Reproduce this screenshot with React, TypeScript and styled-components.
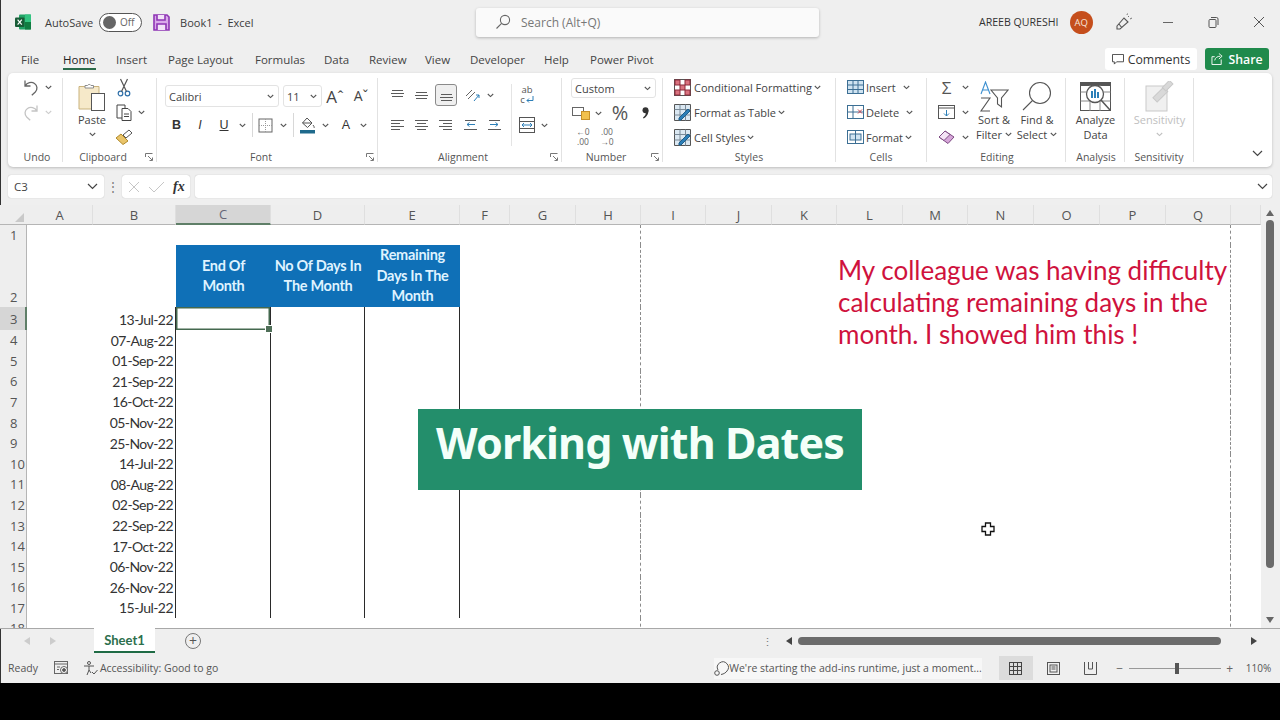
import React from 'react';
import styled, { createGlobalStyle } from 'styled-components';

const UI = `"Open Sans", "Noto Sans", sans-serif`;
const SHEET = `Lato, "Liberation Sans", sans-serif`;

const GlobalStyle = createGlobalStyle`
  html, body { margin: 0; padding: 0; background: #000; }
  body { font-family: ${UI}; color: #444; }
  * { box-sizing: border-box; }
  svg { display: block; }
`;

// small drawn icons
const Chev = ({ c = '#555' }: { c?: string }) => (
  <svg width="7" height="5" viewBox="0 0 7 5" fill="none" stroke={c} strokeWidth="1.1"><path d="M.8 1l2.7 2.6L6.2 1" /></svg>
);
const BigChev = () => (
  <svg width="11" height="7" viewBox="0 0 11 7" fill="none" stroke="#444" strokeWidth="1.2"><path d="M1 1l4.5 4.5L10 1" /></svg>
);
const ExcelLogo = () => (
  <svg width="16" height="16" viewBox="0 0 16 16">
    <rect x="4" y="0.5" width="12" height="15" rx="1" fill="#21a366" />
    <rect x="10" y="0.5" width="6" height="7.5" fill="#33c481" />
    <rect x="10" y="8" width="6" height="7.5" fill="#107c41" />
    <rect x="0" y="3.5" width="9.5" height="9.5" rx="1" fill="#185c37" />
    <path d="M2.6 5.7l4.2 5M6.8 5.7l-4.2 5" stroke="#fff" strokeWidth="1.2" />
  </svg>
);
const Floppy = () => (
  <svg width="17" height="17" viewBox="0 0 17 17" fill="#d9a9ea" stroke="#8e35b5" strokeWidth="1.6">
    <path d="M1 1h13l2 2v13H1z" />
    <path d="M4 1v5h8V1M4 16v-6h9v6" fill="#f2e2f8" />
  </svg>
);
const SearchGlyph = () => (
  <svg width="16" height="16" viewBox="0 0 16 16" fill="none" stroke="#666" strokeWidth="1.1"><circle cx="10" cy="6" r="4.6" /><path d="M6.6 9.4L1.5 14.5" /></svg>
);
const PenGlyph = () => (
  <svg width="18" height="18" viewBox="0 0 18 18" fill="none" stroke="#555" strokeWidth="1.1">
    <path d="M2 13l7-8 4 4-8 7-3 0zM4 11l3 4" /><path d="M13 4l1-1M15 6l2-1M12 2l.5-1.5" strokeWidth="0.8" />
  </svg>
);
const MinGlyph = () => <svg width="11" height="11" viewBox="0 0 11 11"><path d="M0 5.5h10" stroke="#666" /></svg>;
const RestoreGlyph = () => (
  <svg width="11" height="11" viewBox="0 0 11 11" fill="none" stroke="#555"><rect x="1" y="2.5" width="7" height="8" rx="1" /><path d="M3 .5h5.5a1.5 1.5 0 0 1 1.5 1.5v6" /></svg>
);
const CloseGlyph = () => <svg width="12" height="12" viewBox="0 0 12 12" stroke="#555"><path d="M1 1l10 10M11 1L1 11" /></svg>;
const UndoGlyph = ({ c }: { c: string }) => (
  <svg width="16" height="17" viewBox="0 0 16 17" fill="none" stroke={c} strokeWidth="1.3"><path d="M2 1.5V7h5.5M2.2 7C4 3.5 8.5 2.5 11.5 4.5c3 2 3.2 6 .8 8.5l-3.5 3.2" /></svg>
);
const RedoGlyph = ({ c }: { c: string }) => (
  <svg width="16" height="17" viewBox="0 0 16 17" fill="none" stroke={c} strokeWidth="1.3"><path d="M14 1.5V7H8.5M13.8 7C12 3.5 7.5 2.5 4.5 4.5c-3 2-3.2 6-.8 8.5l3.5 3.2" /></svg>
);
const PasteGlyph = () => (
  <svg width="28" height="29" viewBox="0 0 28 29">
    <path d="M1 3.5h20V26H1z" fill="#f6e9c9" stroke="#c9b27c" />
    <path d="M7 5V2.5h2.5a2 2 0 0 1 3.5 0h2.5V5z" fill="#fff" stroke="#8c8c8c" />
    <rect x="13.5" y="10.5" width="13" height="17" fill="#fff" stroke="#555" />
  </svg>
);
const Scissors = () => (
  <svg width="14" height="19" viewBox="0 0 14 19" fill="none" stroke="#2c6ea8" strokeWidth="1.2">
    <circle cx="3.5" cy="15.5" r="2.3" /><circle cx="10.5" cy="15.5" r="2.3" />
    <path d="M4.5 13.5L10.5 1M9.5 13.5L3.5 1" stroke="#555" />
  </svg>
);
const CopyGlyph = () => (
  <svg width="17" height="17" viewBox="0 0 17 17" fill="#fff" stroke="#444"><path d="M1 1h8v13H1z" /><path d="M6 4.5h6l3 3v9H6zM8 10h5M8 12.5h5" /></svg>
);
const Painter = () => (
  <svg width="18" height="16" viewBox="0 0 18 16">
    <path d="M1 9l5-4 7 7-5 3.5z" fill="#e9c46a" stroke="#b18a2c" />
    <path d="M8 6l6-5 3 3-6 5z" fill="#fff" stroke="#555" />
  </svg>
);
const FillGlyph = () => (
  <svg width="17" height="18" viewBox="0 0 17 18" fill="none" stroke="#555">
    <path d="M8 2l5 5-4.5 4.5L3.5 7zM3.5 7H13" /><path d="M14 9c1 1.5 1.5 2 1 3" />
    <rect x="1" y="14" width="15" height="3.5" fill="#1f6a8c" stroke="none" />
  </svg>
);
const BordersGlyph = () => (
  <svg width="15" height="15" viewBox="0 0 15 15" fill="none" stroke="#999" strokeDasharray="1 1"><rect x="1" y="1" width="13" height="13" stroke="#666" strokeDasharray="none" /><path d="M7.5 1v13M1 7.5h13" /></svg>
);
const Lines = ({ kind }: { kind: 'top' | 'mid' | 'bot' | 'left' | 'center' | 'right' | 'out' | 'in' }) => {
  const row = { top: [2, 5, 8], mid: [4, 7, 10], bot: [6, 9, 12], left: [2, 5, 8, 11], center: [2, 5, 8, 11], right: [2, 5, 8, 11], out: [2, 11], in: [2, 11] }[kind];
  const short = (i: number) => {
    if (kind === 'left') return i % 2 ? 'M1 0h9' : 'M1 0h13';
    if (kind === 'right') return i % 2 ? 'M5 0h9' : 'M1 0h13';
    if (kind === 'center') return i % 2 ? 'M3 0h9' : 'M1 0h13';
    return i % 2 ? 'M1 0h13' : 'M2 0h11';
  };
  return (
    <svg width="15" height="14" viewBox="0 0 15 14" fill="none" stroke="#5b5b5b">
      {row.map((y, i) => <path key={y} d={short(i)} transform={`translate(0 ${y + 0.5})`} />)}
      {kind === 'out' && <path d="M12 6.5H4M6.5 4.5L4 6.5l2.5 2" stroke="#2c7fb8" />}
      {kind === 'in' && <path d="M3 6.5h8M8.5 4.5l2.5 2-2.5 2" stroke="#2c7fb8" />}
    </svg>
  );
};
const Orient = () => (
  <svg width="16" height="15" viewBox="0 0 16 15" fill="none" stroke="#666"><path d="M2 8l6-6M4 11l7-7" /><path d="M10 13l5-6M15 7v3M15 7h-3" stroke="#2c7fb8" /></svg>
);
const ReturnArrow = () => (
  <svg width="9" height="8" viewBox="0 0 9 8" fill="none" stroke="#2c7fb8"><path d="M8 0v4.5H2M4 2.5l-2 2 2 2" /></svg>
);
const MergeGlyph = () => (
  <svg width="16" height="16" viewBox="0 0 16 16" fill="none" stroke="#555"><rect x=".5" y=".5" width="15" height="15" /><path d="M.5 4.5h15M.5 11.5h15" /><path d="M3 8h10M5 6L3 8l2 2M11 6l2 2-2 2" stroke="#2c7fb8" /></svg>
);
const CurrencyGlyph = () => (
  <svg width="18" height="14" viewBox="0 0 18 14" fill="none" stroke="#666"><rect x=".5" y="1.5" width="11" height="8" /><rect x="9.5" y="5.5" width="8" height="8" fill="#f2c14e" stroke="#c8912a" /></svg>
);
const CommaGlyph = () => (
  <svg width="7" height="12" viewBox="0 0 7 12" fill="#333"><circle cx="3.5" cy="3.2" r="3" /><path d="M6.4 3.2C6.6 7 4.5 10 1.5 11.5L1 10.5C3 9 4 7.5 3.8 5z" /></svg>
);
const CfGlyph = () => (
  <svg width="17" height="17" viewBox="0 0 17 17" stroke="#8c2b3a">
    <rect x=".5" y=".5" width="16" height="16" fill="#fff" stroke="#555" />
    <rect x="1" y="1" width="5" height="5" fill="#d9727f" /><rect x="11" y="1" width="5" height="5" fill="#d9727f" />
    <rect x="6" y="6" width="5" height="5" fill="#d9727f" /><rect x="1" y="11" width="5" height="5" fill="#d9727f" /><rect x="11" y="11" width="5" height="5" fill="#d9727f" />
  </svg>
);
const TableGlyph = () => (
  <svg width="17" height="17" viewBox="0 0 17 17" fill="none" stroke="#555">
    <path d="M.5.5h16v16H.5z" fill="#dbe8f2" /><path d="M.5 5.5h16M.5 11h16M6 .5v16M11.5.5v16" stroke="#7a8b99" />
    <path d="M5 14l9-9 2 2-9 9H5z" fill="#2c7fb8" stroke="#1d5f8c" />
  </svg>
);
const CellInsert = () => (
  <svg width="17" height="14" viewBox="0 0 17 14" fill="#cfe3f1" stroke="#3c6f94"><rect x=".5" y=".5" width="16" height="13" /><path d="M.5 5h16M.5 9.5h16M6 .5v13M11 .5v13" fill="none" /></svg>
);
const CellDelete = () => (
  <svg width="17" height="14" viewBox="0 0 17 14" fill="#fff" stroke="#3c6f94"><rect x=".5" y=".5" width="16" height="13" /><path d="M.5 7h16M6 .5v13" fill="none" /><path d="M11 4.5l4 4M15 4.5l-4 4" stroke="#c8414f" /></svg>
);
const CellFormat = () => (
  <svg width="17" height="14" viewBox="0 0 17 14" fill="#cfe3f1" stroke="#3c6f94"><rect x=".5" y=".5" width="16" height="13" fill="#fff" /><rect x="3" y="4" width="11" height="6" /><path d="M8.5.5v13" fill="none" /></svg>
);
const FillDown = () => (
  <svg width="17" height="14" viewBox="0 0 17 14" fill="none" stroke="#555"><rect x=".5" y=".5" width="16" height="13" /><path d="M.5 3h16" /><path d="M8.5 5v6M6 8.5L8.5 11 11 8.5" stroke="#2c7fb8" /></svg>
);
const Eraser = () => (
  <svg width="17" height="14" viewBox="0 0 17 14" stroke="#7d4a82"><path d="M1 7l6-6 9 6-6 6.5z" fill="#d6a6d9" /><path d="M1 7l6-6 5 3.5-6 6z" fill="#f4e3f5" /></svg>
);
const SortFilter = () => (
  <svg width="30" height="31" viewBox="0 0 30 31" fill="none" strokeWidth="1.1">
    <path d="M2 13L6.5 1 11 13M3.5 9h6" stroke="#3c8fd0" />
    <path d="M2 17h9L2 30h9" stroke="#555" />
    <path d="M12 9h17l-6.5 8v9l-4-3v-6z" stroke="#555" />
  </svg>
);
const Magnifier = () => (
  <svg width="30" height="31" viewBox="0 0 30 31" fill="none" stroke="#555" strokeWidth="1.1"><circle cx="18" cy="12" r="10.5" /><path d="M10.5 19.5L1 29" /></svg>
);
const AnalyzeGlyph = () => (
  <svg width="31" height="31" viewBox="0 0 31 31" fill="none" stroke="#555">
    <rect x=".5" y="1.5" width="30" height="28" /><path d="M.5 1.5h30v3H.5z" fill="#555" />
    <path d="M.5 11h30M.5 20h30M10 4v26M20 4v26" stroke="#888" />
    <circle cx="15" cy="13" r="8.5" fill="#fff" strokeWidth="1.3" />
    <path d="M11 10v7h2v-7zM14 8v9h2V8zM17 11v6h2v-6z" fill="#2c7fb8" stroke="none" />
    <path d="M21 19l9 10" strokeWidth="1.5" />
  </svg>
);
const SensitivityGlyph = () => (
  <svg width="30" height="31" viewBox="0 0 30 31" stroke="#c9c9c9" fill="#f0f0f0">
    <rect x="1" y="5" width="21" height="25" />
    <rect x="8" y="11" width="15" height="6" transform="rotate(-45 15 14)" fill="#d9d9d9" />
    <rect x="18" y="2" width="10" height="5" transform="rotate(-45 23 5)" fill="#d9d9d9" />
  </svg>
);
const Launcher = () => (
  <svg width="8" height="8" viewBox="0 0 8 8" fill="none" stroke="#777"><path d="M.5 4V.5h7M3 3l4 4M4.5 7.5h3v-3" /></svg>
);
const GridViewGlyph = () => (
  <svg width="13" height="13" viewBox="0 0 13 13" fill="none" stroke="#444"><rect x=".5" y=".5" width="12" height="12" /><path d="M4.5.5v12M8.5.5v12M.5 4.5h12M.5 8.5h12" /></svg>
);
const PageViewGlyph = () => (
  <svg width="13" height="13" viewBox="0 0 13 13" fill="none" stroke="#555"><rect x=".5" y=".5" width="12" height="12" /><rect x="3" y="3" width="7" height="7" /><path d="M4.5 5h4M4.5 7h4" /></svg>
);
const BreakViewGlyph = () => (
  <svg width="13" height="13" viewBox="0 0 13 13" fill="none" stroke="#555"><path d="M.5 0v12.5h12V0M4.5 0v7h4V0" /></svg>
);
const MacroGlyph = () => (
  <svg width="15" height="14" viewBox="0 0 15 14" fill="none" stroke="#666"><rect x=".5" y=".5" width="13" height="12" /><path d="M.5 3h13M3 6h3M3 8.5h2" /><circle cx="10" cy="9" r="3.5" fill="#fff" /><circle cx="10" cy="9" r="1.5" fill="#555" /></svg>
);
const AccessGlyph = () => (
  <svg width="15" height="15" viewBox="0 0 15 15" fill="none" stroke="#555"><circle cx="6" cy="2" r="1.5" /><path d="M1 5h10M6 5v4l-2 5M6 9l2 3M9 11l2 2 3.5-4" /></svg>
);
const RuntimeGlyph = () => (
  <svg width="15" height="16" viewBox="0 0 15 16" fill="none" stroke="#555"><path d="M4 10a5.5 5.5 0 1 1 9 1c-1 1.5-3 3-6 3.5" /><circle cx="3" cy="13" r="2.3" /></svg>
);
const CommentGlyph = () => (
  <svg width="12" height="11" viewBox="0 0 13 12" fill="none" stroke="#444"><path d="M.5.5h12v8H5L2.5 11V8.5h-2z" /></svg>
);
const ShareGlyph = () => (
  <svg width="13" height="12" viewBox="0 0 14 13" fill="none" stroke="#fff"><path d="M11 7v5.5H1V4h3" /><path d="M4 8c.5-3 3-4.5 6-4.5M8.5.5L12 3.5 8.5 6.5" /></svg>
);

const Page = styled.div`
  width: 1280px;
  height: 720px;
  background: #000;
  overflow: hidden;
`;

const Window = styled.div`
  height: 683px;
  background: #efefef;
  box-shadow: inset 1px 0 0 #333;
  display: flex;
  flex-direction: column;
`;

const TitleBar = styled.div`
  height: 44px;
  display: flex;
  align-items: center;
  font-size: 11px;
`;

const TitleLeft = styled.div`
  width: 476px;
  display: flex;
  align-items: center;
  padding-left: 15px;
`;

const AppText = styled.span<{ $ml: number }>`
  margin-left: ${(p) => p.$ml}px;
  color: #3c3c3c;
  white-space: nowrap;
`;

const Toggle = styled.div`
  width: 43px;
  height: 19px;
  margin-left: 6px;
  border: 1px solid #555;
  border-radius: 10px;
  background: #fff;
  display: flex;
  align-items: center;
  gap: 4px;
  padding-left: 3px;
  font-size: 10px;
  color: #666;
`;

const ToggleKnob = styled.span`
  width: 13px;
  height: 13px;
  border-radius: 50%;
  background: #666;
`;

const SearchBox = styled.div`
  width: 343px;
  height: 29px;
  background: #fafafa;
  border-radius: 3px;
  box-shadow: 0 1px 3px rgba(0, 0, 0, 0.25);
  display: flex;
  align-items: center;
  gap: 10px;
  padding-left: 19px;
  font-size: 12px;
  color: #777;
`;

const TitleRight = styled.div`
  flex: 1;
  display: flex;
  align-items: center;
  padding-left: 160px;
  white-space: nowrap;
  font-size: 10.6px;
  color: #333;
`;

const Avatar = styled.div`
  width: 23px;
  height: 23px;
  margin-left: 11px;
  border-radius: 50%;
  background: #c54e1c;
  color: #f7e4d8;
  font-size: 9.5px;
  display: flex;
  align-items: center;
  justify-content: center;
`;

const WinSlot = styled.div<{ $w: number }>`
  width: ${(p) => p.$w}px;
  display: flex;
  justify-content: center;
`;

const TabRow = styled.div`
  height: 29px;
  display: flex;
  align-items: flex-start;
  padding-left: 21px;
  font-size: 11.5px;
  color: #444;
`;

const Tab = styled.div<{ $w: number }>`
  width: ${(p) => p.$w}px;
  flex: none;
`;

const TabLabel = styled.div<{ $active?: boolean }>`
  display: inline-block;
  height: 26px;
  line-height: 31px;
  white-space: nowrap;
  color: ${(p) => (p.$active ? '#222' : '#444')};
  border-bottom: 2px solid ${(p) => (p.$active ? '#2b6a4a' : 'transparent')};
`;

const TabActions = styled.div`
  margin-left: auto;
  display: flex;
  gap: 8px;
  padding: 4px 11px 0 0;
`;

const CommentsButton = styled.div`
  width: 92px;
  height: 22px;
  background: #fff;
  border-radius: 3px;
  display: flex;
  align-items: center;
  justify-content: center;
  gap: 4px;
  font-size: 12.3px;
  color: #333;
`;

const ShareButton = styled(CommentsButton)`
  width: 64px;
  background: #1f8a4c;
  color: #fff;
  font-weight: 600;
`;

const Ribbon = styled.div`
  height: 94px;
  margin: 0 8px;
  padding: 5px 0;
  background: #fff;
  border-radius: 5px;
  box-shadow: 0 1px 3px rgba(0, 0, 0, 0.22);
  display: flex;
`;

const Group = styled.div<{ $w: number; $last?: boolean }>`
  width: ${(p) => p.$w}px;
  flex: none;
  display: flex;
  flex-direction: column;
  border-right: ${(p) => (p.$last ? 'none' : '1px solid #e2e2e2')};
`;

const GroupBody = styled.div<{ $pl?: number; $pt?: number }>`
  height: 72px;
  flex: none;
  display: flex;
  padding-left: ${(p) => p.$pl ?? 0}px;
  padding-top: ${(p) => p.$pt ?? 0}px;
`;

const GroupLabel = styled.div`
  display: grid;
  grid-template-columns: 1fr auto 1fr;
  align-items: center;
  height: 14px;
  flex: none;
  font-size: 10.5px;
  color: #555;
`;

const LabelText = styled.span<{ $shift: number }>`
  grid-column: 2;
  white-space: nowrap;
  margin-left: ${(p) => (p.$shift > 0 ? p.$shift * 2 : 0)}px;
  margin-right: ${(p) => (p.$shift < 0 ? -p.$shift * 2 : 0)}px;
`;

const LauncherSlot = styled.span`
  grid-column: 3;
  justify-self: end;
  padding-right: 3px;
`;

const Stack = styled.div<{ $gap?: number }>`
  display: flex;
  flex-direction: column;
  gap: ${(p) => p.$gap ?? 7}px;
`;

const Row = styled.div<{ $h?: number }>`
  height: ${(p) => p.$h ?? 18}px;
  display: flex;
  align-items: center;
  font-size: 11px;
  color: #444;
  white-space: nowrap;
`;

const Slot = styled.div<{ $w: number; $selected?: boolean }>`
  width: ${(p) => p.$w}px;
  height: 100%;
  flex: none;
  display: flex;
  align-items: center;
  justify-content: center;
  ${(p) => p.$selected && 'border: 1px solid #8a8a8a; border-radius: 3px; background: #efefef; margin: 0 2px; width: 22px;'}
`;

const SmallSep = styled.div`
  width: 1px;
  height: 24px;
  background: #d8d8d8;
`;

const VSep = styled.div`
  width: 1px;
  height: 62px;
  margin: 0 5px;
  background: #e4e4e4;
`;

const ComboBox = styled.div<{ $w: number; $h?: number }>`
  width: ${(p) => p.$w}px;
  height: ${(p) => p.$h ?? 22}px;
  flex: none;
  display: flex;
  align-items: center;
  justify-content: space-between;
  padding: 0 4px 0 3px;
  border: 1px solid #e3e3e3;
  border-radius: 3px;
  background: #fff;
  font-size: 11px;
  color: #444;
`;

const GrowGlyph = styled.span<{ $size: number }>`
  font-size: ${(p) => p.$size}px;
  line-height: 1;
  color: #444;
`;

const FontToggle = styled.span<{ $bold?: boolean; $italic?: boolean; $under?: boolean }>`
  font-family: "Liberation Sans", sans-serif;
  font-size: 12.5px;
  color: #333;
  font-weight: ${(p) => (p.$bold ? 700 : 400)};
  font-style: ${(p) => (p.$italic ? 'italic' : 'normal')};
  text-decoration: ${(p) => (p.$under ? 'underline' : 'none')};
`;

const Wrap = styled.div`
  display: flex;
  flex-direction: column;
  align-items: center;
  font-size: 9.5px;
  line-height: 10px;
  color: #555;
`;

const WrapLine = styled.div`
  display: flex;
  align-items: center;
  height: 10px;
`;

const NumGlyph = styled.span<{ $size: number }>`
  font-size: ${(p) => p.$size}px;
  line-height: 1;
  color: #555;
`;

const DecGlyph = styled.div`
  font-size: 8.5px;
  line-height: 10px;
  text-align: center;
  color: #666;
`;

const IconLabel = styled.span`
  margin-left: 3px;
`;

const CellText = styled.span<{ $w: number }>`
  margin-left: 2px;
  width: ${(p) => p.$w}px;
`;

const BigButton = styled.div<{ $w: number; $disabled?: boolean }>`
  width: ${(p) => p.$w}px;
  flex: none;
  display: flex;
  flex-direction: column;
  align-items: center;
  font-size: 11px;
  line-height: 15px;
  white-space: nowrap;
  color: ${(p) => (p.$disabled ? '#c0c0c0' : '#444')};
`;

const BigIcon = styled.div`
  height: 34px;
  display: flex;
  align-items: flex-end;
`;

const TextLine = styled.div`
  display: flex;
  align-items: center;
  gap: 3px;
  height: 15px;
`;

const Collapse = styled.div`
  flex: 1;
  display: flex;
  justify-content: flex-end;
  align-items: flex-end;
  padding: 0 9px 5px 0;
`;

const FormulaRow = styled.div`
  height: 38px;
  display: flex;
  align-items: flex-start;
  padding: 8px 8px 0;
`;

const InputBox = styled.div`
  height: 23px;
  background: #fff;
  border-radius: 3px;
  box-shadow: 0 0 1px rgba(0, 0, 0, 0.3);
  display: flex;
  align-items: center;
`;

const NameBox = styled(InputBox)`
  width: 96px;
  justify-content: space-between;
  padding: 0 6px;
  font-size: 11.5px;
  color: #444;
`;

const Dots = styled.div`
  width: 18px;
  height: 23px;
  display: flex;
  align-items: center;
  justify-content: center;
  color: #777;
  font-size: 12px;
`;

const FxBox = styled(InputBox)`
  width: 68px;
  padding-left: 6px;
  gap: 8px;
`;

const Fx = styled.span`
  font-family: "Liberation Serif", serif;
  font-style: italic;
  font-weight: 700;
  font-size: 14px;
  color: #333;
`;

const FormulaInput = styled(InputBox)`
  flex: 1;
  margin-left: 5px;
  justify-content: flex-end;
  padding-right: 4px;
`;

const SheetRow = styled.div`
  height: 423px;
  display: flex;
`;

const SheetArea = styled.div`
  position: relative;
  width: 1261px;
  flex: none;
  overflow: hidden;
`;

const Grid = styled.div`
  display: grid;
  grid-template-columns: 27px 66px 83px 95px 94px 95px 50px 66px 65px 65px 66px 65px 66px 65px 66px 66px 66px 65px 30px;
  grid-template-rows: 20px 20px 62px 23px repeat(14, 20.6px) 20px;
  height: 423px;
`;

const Corner = styled.div`
  background: #eeeeee;
  border-bottom: 1px solid #b5b5b5;
  display: flex;
  justify-content: flex-end;
  align-items: flex-end;
  padding: 0 3px 2px 0;
`;

const ColHead = styled.div<{ $active?: boolean }>`
  background: ${(p) => (p.$active ? '#d6d6d6' : '#eeeeee')};
  border-right: 1px solid #dfdfdf;
  border-bottom: ${(p) => (p.$active ? '2px solid #5f7f68' : '1px solid #b5b5b5')};
  display: flex;
  align-items: center;
  justify-content: center;
  font-size: 13px;
  color: ${(p) => (p.$active ? '#667' : '#555')};
`;

const RowHead = styled.div<{ $active?: boolean; $tall?: boolean }>`
  background: ${(p) => (p.$active ? '#d6d6d6' : '#eeeeee')};
  border-right: ${(p) => (p.$active ? '2px solid #5f7f68' : '1px solid #b5b5b5')};
  display: flex;
  align-items: ${(p) => (p.$tall ? 'flex-end' : 'center')};
  padding-left: 10px;
  padding-bottom: ${(p) => (p.$tall ? 1 : 0)}px;
  font-size: 13px;
  color: #555;
`;

const Cell = styled.div<{ $line?: boolean; $dash?: boolean; $selected?: boolean }>`
  position: relative;
  background: #fff;
  border-right: ${(p) => (p.$line ? '1px solid #2a2a2a' : p.$dash ? '1px dashed #8b8b8b' : 'none')};
  display: flex;
  align-items: flex-end;
  justify-content: flex-end;
  padding: 0 2px 1px 0;
  font-family: ${SHEET};
  font-size: 14px;
  letter-spacing: -0.55px;
  line-height: 19px;
  color: #333;
  ${(p) => p.$selected && `
    box-shadow: inset 0 0 0 1.5px #44694f;
    z-index: 1;
    &::after {
      content: '';
      position: absolute;
      right: -3px;
      bottom: -3px;
      width: 6px;
      height: 6px;
      background: #4f6f58;
      border: 1px solid #fff;
    }
  `}
`;

const HeadCell = styled.div`
  background: #0f70b7;
  display: flex;
  align-items: center;
  justify-content: center;
  text-align: center;
  font-family: ${SHEET};
  font-weight: 700;
  font-size: 14.5px;
  letter-spacing: -0.3px;
  line-height: 20.5px;
  color: #dff3ff;
`;

const Note = styled.div`
  position: absolute;
  left: 838px;
  top: 49px;
  width: 400px;
  font-family: ${SHEET};
  font-size: 26px;
  line-height: 32px;
  color: #cf123d;
`;

const Banner = styled.div`
  position: absolute;
  left: 418px;
  top: 204px;
  width: 444px;
  height: 81px;
  background: #238e6b;
  color: #f4fff9;
  display: flex;
  align-items: center;
  justify-content: center;
  padding-bottom: 15px;
  font-family: "Noto Sans", sans-serif;
  font-weight: 700;
  font-size: 43px;
  letter-spacing: -0.85px;
  white-space: nowrap;
`;

const Cursor = styled.div`
  position: absolute;
  left: 981px;
  top: 317px;
`;

const VScroll = styled.div`
  flex: 1;
  display: flex;
  flex-direction: column;
  align-items: center;
  padding: 5px 1px 0 0;
`;

const VThumb = styled.div`
  width: 8px;
  height: 348px;
  margin-top: 4px;
  background: #6b6b6b;
  border-radius: 4px;
`;

const TriUp = styled.div`
  width: 0;
  height: 0;
  border-left: 4.5px solid transparent;
  border-right: 4.5px solid transparent;
  border-bottom: 6px solid #666;
`;

const TriDown = styled(TriUp)`
  margin-top: 49px;
  border-bottom: none;
  border-top: 6px solid #666;
`;

const TriLeft = styled.div<{ $c?: string }>`
  width: 0;
  height: 0;
  border-top: 4.5px solid transparent;
  border-bottom: 4.5px solid transparent;
  border-right: 6px solid ${(p) => p.$c ?? '#444'};
`;

const TriRight = styled.div<{ $c?: string }>`
  width: 0;
  height: 0;
  border-top: 4.5px solid transparent;
  border-bottom: 4.5px solid transparent;
  border-left: 6px solid ${(p) => p.$c ?? '#444'};
`;

const SheetTabs = styled.div`
  height: 25px;
  border-top: 1px solid #a8a8a8;
  display: flex;
  align-items: center;
`;

const TabNav = styled.div`
  width: 94px;
  height: 100%;
  display: flex;
  align-items: center;
  padding-left: 24px;
  gap: 20px;
`;

const SheetTab = styled.div`
  width: 61px;
  height: 25px;
  margin-top: -1px;
  background: #fff;
  border-bottom: 2px solid #1f6b45;
  display: flex;
  align-items: center;
  justify-content: center;
  font-family: ${SHEET};
  font-weight: 700;
  font-size: 13px;
  color: #2c6f4c;
`;

const AddSheet = styled.div`
  width: 16px;
  height: 16px;
  margin-left: 30px;
  border: 1px solid #777;
  border-radius: 50%;
  display: flex;
  align-items: center;
  justify-content: center;
  font-size: 14px;
  line-height: 1;
  color: #555;
`;

const HScroll = styled.div`
  margin-left: auto;
  width: 520px;
  display: flex;
  align-items: center;
`;

const HDots = styled(Dots)`
  width: 14px;
  height: 16px;
  font-size: 11px;
`;

const HArrowLeft = styled.div`
  width: 24px;
  display: flex;
  justify-content: center;
  padding-left: 6px;
`;

const HThumb = styled.div`
  width: 423px;
  height: 8px;
  background: #6b6b6b;
  border-radius: 4px;
`;

const HArrowRight = styled.div`
  flex: 1;
  display: flex;
  justify-content: center;
  padding-left: 6px;
`;

const StatusBar = styled.div`
  flex: 1;
  display: flex;
  align-items: center;
  font-size: 10.5px;
  color: #555;
  white-space: nowrap;
  padding-left: 8px;
`;

const StatusItem = styled.div<{ $ml?: number }>`
  margin-left: ${(p) => p.$ml ?? 0}px;
  flex: none;
  display: flex;
  align-items: center;
  gap: 2px;
`;

const RuntimeNote = styled(StatusItem)`
  height: 21px;
  gap: 0;
  background: #f7f7f7;
`;

const ViewGroup = styled(StatusItem)`
  gap: 0;
`;

const ViewButton = styled.div<{ $active?: boolean; $w: number }>`
  width: ${(p) => p.$w}px;
  height: 24px;
  flex: none;
  background: ${(p) => (p.$active ? '#dcdcdc' : 'transparent')};
  display: flex;
  align-items: center;
  justify-content: center;
`;

const ZoomSign = styled.span<{ $ml: number }>`
  width: 14px;
  margin-left: ${(p) => p.$ml}px;
  text-align: center;
  font-size: 12px;
  color: #666;
`;

const ZoomTrack = styled.div`
  width: 92px;
  height: 1px;
  margin-left: 2px;
  background: #999;
  display: flex;
  align-items: center;
  padding-left: 46px;
`;

const ZoomThumb = styled.div`
  width: 4px;
  height: 11px;
  flex: none;
  background: #555;
`;

const ZoomValue = styled.span`
  margin-left: 9px;
  font-size: 10px;
`;

const tabs: [string, number, boolean?][] = [
  ['File', 42], ['Home', 53, true], ['Insert', 52], ['Page Layout', 87], ['Formulas', 69], ['Data', 45],
  ['Review', 56], ['View', 45], ['Developer', 74], ['Help', 46], ['Power Pivot', 70],
];

const columns = 'A B C D E F G H I J K L M N O P Q R'.split(' ');
const dates = ['13-Jul-22', '07-Aug-22', '01-Sep-22', '21-Sep-22', '16-Oct-22', '05-Nov-22', '25-Nov-22', '14-Jul-22', '08-Aug-22', '02-Sep-22', '22-Sep-22', '17-Oct-22', '06-Nov-22', '26-Nov-22', '15-Jul-22'];
const headers: Record<number, React.ReactNode> = {
  2: <>End Of<br />Month</>,
  3: <>No Of Days In<br />The Month</>,
  4: <>Remaining<br />Days In The<br />Month</>,
};

const GroupFooter = ({ label, launcher, shift = 0 }: { label: string; launcher?: boolean; shift?: number }) => (
  <GroupLabel>
    <LabelText $shift={shift}>{label}</LabelText>
    {launcher && <LauncherSlot><Launcher /></LauncherSlot>}
  </GroupLabel>
);

const SheetRows = () => {
  const rows = Array.from({ length: 18 }, (_, i) => i + 1);
  return (
    <>
      <Corner><svg width="9" height="9" viewBox="0 0 9 9"><path d="M9 0v9H0z" fill="#c9c9c9" /></svg></Corner>
      {columns.map((c) => <ColHead key={c} $active={c === 'C'}>{c === 'R' ? '' : c}</ColHead>)}
      {rows.map((r) => (
        <React.Fragment key={r}>
          <RowHead $active={r === 3} $tall={r === 2}>{r}</RowHead>
          {columns.map((c, i) => {
            if (r === 2 && headers[i]) return <HeadCell key={c}>{headers[i]}</HeadCell>;
            const inTable = r >= 3 && r <= 17 && i >= 1 && i <= 4;
            return (
              <Cell key={c} $line={inTable} $dash={i === 7 || i === 16} $selected={r === 3 && i === 2}>
                {i === 1 && dates[r - 3]}
              </Cell>
            );
          })}
        </React.Fragment>
      ))}
    </>
  );
};

const App = () => {
  return (
    <Page>
      <GlobalStyle />
      <Window>
        <TitleBar>
          <TitleLeft>
            <ExcelLogo />
            <AppText $ml={14}>AutoSave</AppText>
            <Toggle><ToggleKnob />Off</Toggle>
            <AppText $ml={11}><Floppy /></AppText>
            <AppText $ml={10}>Book1&nbsp; -&nbsp; Excel</AppText>
          </TitleLeft>
          <SearchBox><SearchGlyph />Search (Alt+Q)</SearchBox>
          <TitleRight>
            AREEB QURESHI
            <Avatar>AQ</Avatar>
            <WinSlot $w={62}><PenGlyph /></WinSlot>
            <WinSlot $w={28}><MinGlyph /></WinSlot>
            <WinSlot $w={62}><RestoreGlyph /></WinSlot>
            <WinSlot $w={28}><CloseGlyph /></WinSlot>
          </TitleRight>
        </TitleBar>

        <TabRow>
          {tabs.map(([name, w, active]) => <Tab key={name} $w={w}><TabLabel $active={active}>{name}</TabLabel></Tab>)}
          <TabActions>
            <CommentsButton><CommentGlyph />Comments</CommentsButton>
            <ShareButton><ShareGlyph />Share</ShareButton>
          </TabActions>
        </TabRow>

        <Ribbon>
          <Group $w={55}>
            <GroupBody $pl={13}>
              <Stack>
                <Row><Slot $w={20}><UndoGlyph c="#666" /></Slot><Slot $w={14}><Chev /></Slot></Row>
                <Row><Slot $w={20}><RedoGlyph c="#c4c4c4" /></Slot><Slot $w={14}><Chev c="#ccc" /></Slot></Row>
              </Stack>
            </GroupBody>
            <GroupFooter label="Undo" shift={2} />
          </Group>

          <Group $w={94}>
            <GroupBody $pl={6}>
              <BigButton $w={46}>
                <BigIcon><PasteGlyph /></BigIcon>
                <TextLine>Paste</TextLine>
                <TextLine><Chev /></TextLine>
              </BigButton>
              <Stack>
                <Row><Slot $w={18}><Scissors /></Slot></Row>
                <Row><Slot $w={18}><CopyGlyph /></Slot><Slot $w={16}><Chev /></Slot></Row>
                <Row><Slot $w={18}><Painter /></Slot></Row>
              </Stack>
            </GroupBody>
            <GroupFooter label="Clipboard" launcher shift={-6.5} />
          </Group>

          <Group $w={221}>
            <GroupBody $pl={8} $pt={7}>
              <Stack>
                <Row $h={22}>
                  <ComboBox $w={114}>Calibri<Chev /></ComboBox>
                  <Slot $w={4} />
                  <ComboBox $w={39}>11<Chev /></ComboBox>
                  <Slot $w={26}><GrowGlyph $size={17}>Aˆ</GrowGlyph></Slot>
                  <Slot $w={26}><GrowGlyph $size={14}>Aˇ</GrowGlyph></Slot>
                </Row>
                <Row $h={22}>
                  <Slot $w={23}><FontToggle $bold>B</FontToggle></Slot>
                  <Slot $w={24}><FontToggle $italic>I</FontToggle></Slot>
                  <Slot $w={24}><FontToggle $under>U</FontToggle></Slot>
                  <Slot $w={12}><Chev /></Slot>
                  <Slot $w={8}><SmallSep /></Slot>
                  <Slot $w={19}><BordersGlyph /></Slot>
                  <Slot $w={16}><Chev /></Slot>
                  <Slot $w={4}><SmallSep /></Slot>
                  <Slot $w={24}><FillGlyph /></Slot>
                  <Slot $w={12}><Chev /></Slot>
                  <Slot $w={3} />
                  <Slot $w={24}><FontToggle>A</FontToggle></Slot>
                  <Slot $w={10}><Chev /></Slot>
                </Row>
              </Stack>
            </GroupBody>
            <GroupFooter label="Font" launcher shift={-6} />
          </Group>

          <Group $w={184}>
            <GroupBody $pl={7} $pt={6}>
              <Stack $gap={8}>
                <Row $h={22}>
                  <Slot $w={24}><Lines kind="top" /></Slot>
                  <Slot $w={24}><Lines kind="mid" /></Slot>
                  <Slot $w={26} $selected><Lines kind="bot" /></Slot>
                  <Slot $w={26}><Orient /></Slot>
                  <Slot $w={10}><Chev /></Slot>
                </Row>
                <Row $h={22}>
                  <Slot $w={24}><Lines kind="left" /></Slot>
                  <Slot $w={24}><Lines kind="center" /></Slot>
                  <Slot $w={25}><Lines kind="right" /></Slot>
                  <Slot $w={24}><Lines kind="out" /></Slot>
                  <Slot $w={24}><Lines kind="in" /></Slot>
                </Row>
              </Stack>
              <VSep />
              <Stack $gap={8}>
                <Row $h={22}>
                  <Slot $w={20}>
                    <Wrap>
                      <WrapLine>ab</WrapLine>
                      <WrapLine>c<ReturnArrow /></WrapLine>
                    </Wrap>
                  </Slot>
                </Row>
                <Row $h={22}><Slot $w={20}><MergeGlyph /></Slot><Slot $w={14}><Chev /></Slot></Row>
              </Stack>
            </GroupBody>
            <GroupFooter label="Alignment" launcher shift={-6.5} />
          </Group>

          <Group $w={101}>
            <GroupBody $pl={9}>
              <Stack $gap={6}>
                <ComboBox $w={85} $h={20}>Custom<Chev /></ComboBox>
                <Row>
                  <Slot $w={19}><CurrencyGlyph /></Slot>
                  <Slot $w={16}><Chev /></Slot>
                  <Slot $w={28}><NumGlyph $size={20}>%</NumGlyph></Slot>
                  <Slot $w={22}><CommaGlyph /></Slot>
                </Row>
                <Row>
                  <Slot $w={24}><DecGlyph>←0<br />.00</DecGlyph></Slot>
                  <Slot $w={24}><DecGlyph>.00<br />→0</DecGlyph></Slot>
                </Row>
              </Stack>
            </GroupBody>
            <GroupFooter label="Number" launcher shift={-6} />
          </Group>

          <Group $w={173}>
            <GroupBody $pl={11}>
              <Stack>
                <Row><CfGlyph /><IconLabel>Conditional Formatting</IconLabel><Slot $w={11}><Chev /></Slot></Row>
                <Row><TableGlyph /><IconLabel>Format as Table</IconLabel><Slot $w={11}><Chev /></Slot></Row>
                <Row><TableGlyph /><IconLabel>Cell Styles</IconLabel><Slot $w={11}><Chev /></Slot></Row>
              </Stack>
            </GroupBody>
            <GroupFooter label="Styles" />
          </Group>

          <Group $w={91}>
            <GroupBody $pl={11}>
              <Stack>
                <Row><CellInsert /><CellText $w={37}>Insert</CellText><Chev /></Row>
                <Row><CellDelete /><CellText $w={40}>Delete</CellText><Chev /></Row>
                <Row><CellFormat /><CellText $w={39}>Format</CellText><Chev /></Row>
              </Stack>
            </GroupBody>
            <GroupFooter label="Cells" />
          </Group>

          <Group $w={139}>
            <GroupBody $pl={10}>
              <Stack>
                <Row><Slot $w={19}><NumGlyph $size={17}>Σ</NumGlyph></Slot><Slot $w={18}><Chev /></Slot></Row>
                <Row><Slot $w={19}><FillDown /></Slot><Slot $w={18}><Chev /></Slot></Row>
                <Row><Slot $w={19}><Eraser /></Slot><Slot $w={18}><Chev /></Slot></Row>
              </Stack>
              <BigButton $w={40}>
                <BigIcon><SortFilter /></BigIcon>
                <TextLine>Sort &amp;</TextLine>
                <TextLine>Filter<Chev /></TextLine>
              </BigButton>
              <BigButton $w={46}>
                <BigIcon><Magnifier /></BigIcon>
                <TextLine>Find &amp;</TextLine>
                <TextLine>Select<Chev /></TextLine>
              </BigButton>
            </GroupBody>
            <GroupFooter label="Editing" shift={1} />
          </Group>

          <Group $w={59}>
            <GroupBody>
              <BigButton $w={59}>
                <BigIcon><AnalyzeGlyph /></BigIcon>
                <TextLine>Analyze</TextLine>
                <TextLine>Data</TextLine>
              </BigButton>
            </GroupBody>
            <GroupFooter label="Analysis" shift={1} />
          </Group>

          <Group $w={69}>
            <GroupBody>
              <BigButton $w={69} $disabled>
                <BigIcon><SensitivityGlyph /></BigIcon>
                <TextLine>Sensitivity</TextLine>
                <TextLine><Chev c="#c0c0c0" /></TextLine>
              </BigButton>
            </GroupBody>
            <GroupFooter label="Sensitivity" />
          </Group>

          <Collapse><BigChev /></Collapse>
        </Ribbon>

        <FormulaRow>
          <NameBox>C3<BigChev /></NameBox>
          <Dots>⋮</Dots>
          <FxBox>
            <svg width="12" height="12" viewBox="0 0 12 12" stroke="#c6c6c6"><path d="M1 1l10 10M11 1L1 11" /></svg>
            <svg width="17" height="12" viewBox="0 0 17 12" fill="none" stroke="#c6c6c6"><path d="M1 6l5 5L16 1" /></svg>
            <Fx>fx</Fx>
          </FxBox>
          <FormulaInput><BigChev /></FormulaInput>
        </FormulaRow>

        <SheetRow>
          <SheetArea>
            <Grid><SheetRows /></Grid>
            <Note>My colleague was having difficulty calculating remaining days in the month. I showed him this !</Note>
            <Banner>Working with Dates</Banner>
            <Cursor>
              <svg width="14" height="14" viewBox="0 0 14 14" fill="#fff" stroke="#111" strokeWidth="1.3"><path d="M4.5 1h5v3.5H13v5H9.5V13h-5V9.5H1v-5h3.5z" /></svg>
            </Cursor>
          </SheetArea>
          <VScroll>
            <TriUp />
            <VThumb />
            <TriDown />
          </VScroll>
        </SheetRow>

        <SheetTabs>
          <TabNav><TriLeft $c="#ccc" /><TriRight $c="#ccc" /></TabNav>
          <SheetTab>Sheet1</SheetTab>
          <AddSheet>+</AddSheet>
          <HScroll>
            <HDots>⋮</HDots>
            <HArrowLeft><TriLeft /></HArrowLeft>
            <HThumb />
            <HArrowRight><TriRight /></HArrowRight>
          </HScroll>
        </SheetTabs>

        <StatusBar>
          Ready
          <StatusItem $ml={16}><MacroGlyph /></StatusItem>
          <StatusItem $ml={14}><AccessGlyph />Accessibility: Good to go</StatusItem>
          <RuntimeNote $ml={496}><RuntimeGlyph />We're starting the add-ins runtime, just a moment...</RuntimeNote>
          <ViewGroup $ml={17}>
            <ViewButton $w={34} $active><GridViewGlyph /></ViewButton>
            <ViewButton $w={42}><PageViewGlyph /></ViewButton>
            <ViewButton $w={32}><BreakViewGlyph /></ViewButton>
            <ZoomSign $ml={6}>−</ZoomSign>
            <ZoomTrack><ZoomThumb /></ZoomTrack>
            <ZoomSign $ml={2}>+</ZoomSign>
            <ZoomValue>110%</ZoomValue>
          </ViewGroup>
        </StatusBar>
      </Window>
    </Page>
  );
};

export default App;
